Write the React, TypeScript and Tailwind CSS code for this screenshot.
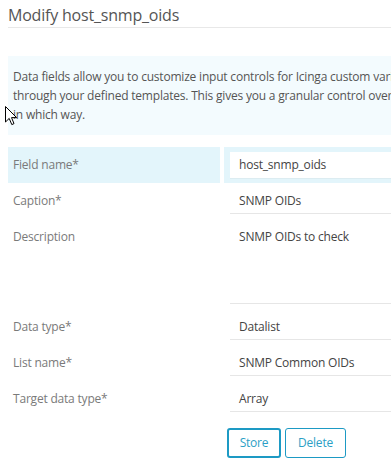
const rows = [
  { label: "Field name*", value: "host_snmp_oids", active: true },
  { label: "Caption*", value: "SNMP OIDs" },
  { label: "Description", value: "SNMP OIDs to check", tall: true },
  { label: "Data type*", value: "Datalist" },
  { label: "List name*", value: "SNMP Common OIDs" },
  { label: "Target data type*", value: "Array" },
];

function Cursor() {
  return (
    <svg className="absolute left-[5px] top-[106px]" width="13" height="20" viewBox="0 0 13 20">
      <path
        d="M0.5 0.5 L0.5 16 L4.2 12.4 L6.8 18.6 L9 17.6 L6.5 11.6 L11.6 11.6 Z"
        fill="#fff"
        stroke="#000"
        strokeWidth="1"
        strokeLinejoin="miter"
      />
    </svg>
  );
}

export default function App() {
  return (
    <div className="relative h-[467px] w-[391px] overflow-hidden bg-white font-['Open_Sans',sans-serif] text-[12px] tracking-[-0.2px] text-[#555]">
      {/* Header */}
      <div className="ml-2 border-b border-[#e8e8e8] pt-[5px] pb-[2px]">
        <h1 className="text-[16px] leading-[20px] tracking-[-0.2px] text-[#555]">Modify host_snmp_oids</h1>
      </div>

      {/* Info box */}
      <div className="ml-2 mt-[28px] w-[640px] bg-[#f3fbfe] py-[11px] pl-[5px] leading-[19px] text-[#555]">
        <p className="whitespace-nowrap">
          Data fields allow you to customize input controls for Icinga custom variables. Once you defined them here, you can provide them
        </p>
        <p className="whitespace-nowrap">
          through your defined templates. This gives you a granular control over what properties your users should be allowed to configure
        </p>
        <p className="whitespace-nowrap">in which way.</p>
      </div>

      {/* Form */}
      <div className="mt-[12px] ml-2">
        {rows.map((r) => (
          <div key={r.label} className="flex gap-[4px]">
            <div
              className={
                r.active
                  ? "w-[212px] shrink-0 bg-[#e3f5fb] py-[5px] pl-[5px] leading-[26px] text-[#7a7a7a]"
                  : "w-[212px] shrink-0 py-[5px] pl-[5px] leading-[26px] text-[#7a7a7a]"
              }
            >
              {r.label}
            </div>
            <div className={r.active ? "flex-1 bg-[#e3f5fb] py-[5px] pl-[6px]" : "flex-1 py-[5px] pl-[6px]"}>
              <div
                className={
                  r.tall
                    ? "h-[80px] border-b border-[#e6e6e6] bg-white pl-[9px] leading-[26px] text-[#444]"
                    : r.active
                      ? "h-[26px] bg-white pl-[9px] leading-[26px] text-[#444] shadow-[0_1px_0_#dcecf1]"
                      : "h-[26px] border-b border-[#e6e6e6] bg-white pl-[9px] leading-[25px] text-[#444]"
                }
              >
                {r.value}
              </div>
            </div>
          </div>
        ))}

        {/* Actions */}
        <div className="mt-[11px] flex gap-[4px] pl-[219px]">
          <button className="h-[30px] w-[54px] rounded-[3px] border-2 border-[#1d9ac4] bg-white text-[12px] text-[#2b9fc6]">
            Store
          </button>
          <button className="h-[30px] w-[61px] rounded-[3px] border border-[#1d9ac4] bg-white text-[12px] text-[#2b9fc6]">
            Delete
          </button>
        </div>
      </div>

      <Cursor />
    </div>
  );
}
